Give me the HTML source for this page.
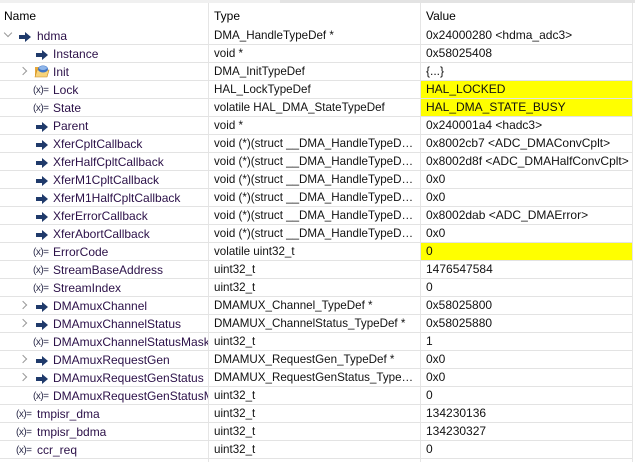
<!DOCTYPE html>
<html><head><style>
body{margin:0;width:635px;height:462px;overflow:hidden;background:#fff;font-family:"Liberation Sans",sans-serif;font-size:12px;position:relative}
.top{position:absolute;left:0;top:0;width:635px;height:3px;background:#f0f0f0}
.top2{position:absolute;left:280px;top:0;width:355px;height:3px;background:#e3e3e3}
.vl{position:absolute;top:3px;width:1px;height:459px;background:#e5e5e5}
.h{position:absolute;top:9px;color:#000}
.r{position:absolute;left:0;width:632px;height:17px;border-bottom:1px solid #e3e3e3}
.r span{position:absolute;top:2px;white-space:nowrap;overflow:hidden}
.n{color:#2b1048}
.r span.t{left:214px;width:202px;color:#111;font-size:11.6px;text-overflow:ellipsis}
.r span.v{left:421px;width:206px;padding-left:5px;color:#111;top:0;height:17px;line-height:17px}
.y{background:#ffff00}
.ch{position:absolute;top:4px;width:5px;height:5px;border-right:1.5px solid #9a9a9a;border-bottom:1.5px solid #9a9a9a}
.r span.x{top:4px;font-size:10px;color:#2b2b4a;letter-spacing:-0.5px;overflow:visible}
</style></head><body>
<div class="top"></div><div class="top2"></div>
<div class="vl" style="left:208px"></div><div class="vl" style="left:420px"></div><div class="vl" style="left:632px"></div>
<div class="h" style="left:4px">Name</div><div class="h" style="left:214px">Type</div><div class="h" style="left:426px">Value</div>
<div id="rows"></div>
<script>
var A='<svg width="12" height="10" viewBox="0 0 12 10"><path d="M0 3h6V0l6 5-6 5V7H0z" fill="#1f3a6b"/></svg>';
var F='<svg width="16" height="14" viewBox="0 0 16 14"><path d="M1 3h5l1 1h6v8H1z" fill="#e8a93a"/><path d="M3 6h12l-2 7H1z" fill="#f7d37a" stroke="#c98a20" stroke-width=".6"/><ellipse cx="9" cy="5" rx="5" ry="3.5" fill="#3f74c4"/><ellipse cx="9" cy="4" rx="4" ry="2" fill="#8fb6ea"/></svg>';
var V='void (*)(struct __DMA_HandleTypeDef *)';
var d=[
[0,'dn','a','hdma','DMA_HandleTypeDef *','0x24000280 &lt;hdma_adc3&gt;'],
[1,'','a','Instance','void *','0x58025408'],
[1,'r','f','Init','DMA_InitTypeDef','{...}'],
[1,'','x','Lock','HAL_LockTypeDef','HAL_LOCKED',1],
[1,'','x','State','volatile HAL_DMA_StateTypeDef','HAL_DMA_STATE_BUSY',1],
[1,'','a','Parent','void *','0x240001a4 &lt;hadc3&gt;'],
[1,'','a','XferCpltCallback',V,'0x8002cb7 &lt;ADC_DMAConvCplt&gt;'],
[1,'','a','XferHalfCpltCallback',V,'0x8002d8f &lt;ADC_DMAHalfConvCplt&gt;'],
[1,'','a','XferM1CpltCallback',V,'0x0'],
[1,'','a','XferM1HalfCpltCallback',V,'0x0'],
[1,'','a','XferErrorCallback',V,'0x8002dab &lt;ADC_DMAError&gt;'],
[1,'','a','XferAbortCallback',V,'0x0'],
[1,'','x','ErrorCode','volatile uint32_t','0',1],
[1,'','x','StreamBaseAddress','uint32_t','1476547584'],
[1,'','x','StreamIndex','uint32_t','0'],
[1,'r','a','DMAmuxChannel','DMAMUX_Channel_TypeDef *','0x58025800'],
[1,'r','a','DMAmuxChannelStatus','DMAMUX_ChannelStatus_TypeDef *','0x58025880'],
[1,'','x','DMAmuxChannelStatusMask','uint32_t','1'],
[1,'r','a','DMAmuxRequestGen','DMAMUX_RequestGen_TypeDef *','0x0'],
[1,'r','a','DMAmuxRequestGenStatus','DMAMUX_RequestGenStatus_TypeDef *','0x0'],
[1,'','x','DMAmuxRequestGenStatusMask','uint32_t','0'],
[-1,'','x','tmpisr_dma','uint32_t','134230136'],
[-1,'','x','tmpisr_bdma','uint32_t','134230327'],
[-1,'','x','ccr_req','uint32_t','0']];
var h='';
d.forEach(function(e,i){
var lv=e[0],top=27+18*i,ix,tx;
if(lv==0){ix=19;tx=37}else if(lv==1){ix=36;tx=53}else{ix=19;tx=37}
var s='<div class="r" style="top:'+top+'px">';
if(e[1]=='dn')s+='<i class="ch" style="left:5px;top:3px;transform:rotate(45deg)"></i>';
if(e[1]=='r')s+='<i class="ch" style="left:20px;top:5px;transform:rotate(-45deg)"></i>';
if(e[2]=='a')s+='<span style="left:'+ix+'px;top:4px">'+A+'</span>';
if(e[2]=='f')s+='<span style="left:'+(ix-2)+'px;top:1px">'+F+'</span>';
if(e[2]=='x')s+='<span class="x" style="left:'+(ix-3)+'px">(x)=</span>';
s+='<span class="n" style="left:'+tx+'px;width:'+(208-tx)+'px">'+e[3]+'</span>';
s+='<span class="t">'+e[4]+'</span>';
s+='<span class="v'+(e[6]?' y':'')+'">'+e[5]+'</span></div>';
h+=s;});
document.getElementById('rows').innerHTML=h;
</script>
</body></html>
